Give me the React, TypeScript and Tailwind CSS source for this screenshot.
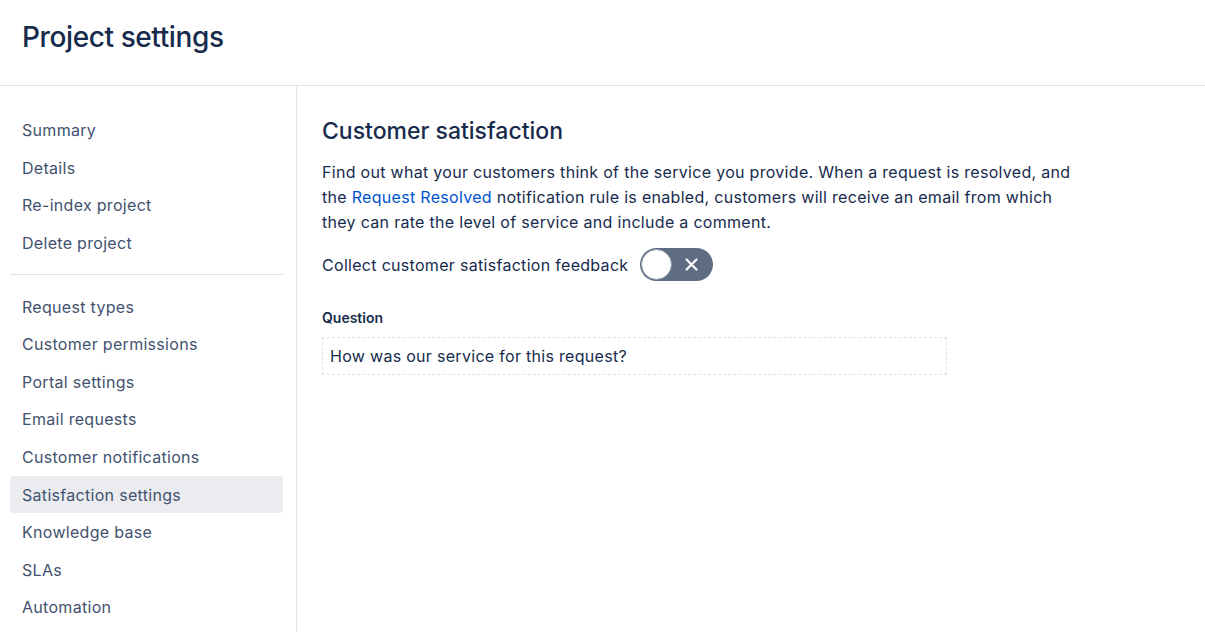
import React from "react";

const groupOne = ["Summary", "Details", "Re-index project", "Delete project"];
const groupTwo = [
  "Request types",
  "Customer permissions",
  "Portal settings",
  "Email requests",
  "Customer notifications",
  "Satisfaction settings",
  "Knowledge base",
  "SLAs",
  "Automation",
];

function NavItem({ label, active }: { label: string; active?: boolean }) {
  return (
    <div
      className={
        "flex h-[37.6px] items-center rounded px-3 text-[16px] tracking-[0.3px] text-[#42526e] " +
        (active ? "bg-[#ebecf0]" : "")
      }
    >
      {label}
    </div>
  );
}

export default function App() {
  return (
    <div
      className="flex h-[632px] w-[1205px] flex-col overflow-hidden bg-white text-[#172b4d]"
      style={{ fontFamily: "Inter, 'Noto Sans', sans-serif" }}
    >
      <header className="flex h-[86px] shrink-0 items-start border-b border-[#dfe1e6] px-[22px] pt-[19px]">
        <h1 className="text-[28px] font-medium leading-[36px] tracking-[-0.4px] text-[#172b4d]">
          Project settings
        </h1>
      </header>
      <div className="flex flex-1">
        <aside className="w-[297px] shrink-0 border-r border-[#dfe1e6] pl-[10px] pr-[13px] pt-[25.5px]">
          {groupOne.map((l) => (
            <NavItem key={l} label={l} />
          ))}
          <div className="my-[12.5px] h-px bg-[#dfe1e6]" />
          {groupTwo.map((l) => (
            <NavItem key={l} label={l} active={l === "Satisfaction settings"} />
          ))}
        </aside>
        <main className="flex-1 pl-[25px] pt-[30px] tracking-[0.3px]">
          <h2 className="text-[23px] font-medium leading-[30px] tracking-normal text-[#172b4d]">
            Customer satisfaction
          </h2>
          <p className="mt-[14px] whitespace-nowrap text-[16px] leading-[25px] text-[#172b4d]">
            Find out what your customers think of the service you provide. When a request is resolved, and
            <br />
            the <span className="text-[#0052cc]">Request Resolved</span> notification rule is enabled, customers will receive an email from which
            <br />
            they can rate the level of service and include a comment.
          </p>
          <div className="mt-[13px] flex items-center gap-3">
            <span className="text-[16px] text-[#172b4d]">Collect customer satisfaction feedback</span>
            <div className="relative flex h-[33px] w-[73px] items-center rounded-full bg-[#5e6c84]">
              <div className="ml-[1px] h-[31px] w-[31px] rounded-full border border-[#8993a4] bg-white" />
              <svg
                className="absolute left-[44px] top-[9px]"
                width="15"
                height="15"
                viewBox="0 0 15 15"
                fill="none"
                stroke="white"
                strokeWidth="2.2"
                strokeLinecap="round"
              >
                <path d="M2.5 2.5l10 10M12.5 2.5l-10 10" />
              </svg>
            </div>
          </div>
          <div className="mt-[28px] text-[14px] font-semibold leading-[18px] tracking-normal text-[#172b4d]">
            Question
          </div>
          <div className="mt-[10px] flex h-[38px] w-[625px] items-center border border-dashed border-[#dfe1e6] px-[7px] text-[16px] text-[#172b4d]">
            How was our service for this request?
          </div>
        </main>
      </div>
    </div>
  );
}
